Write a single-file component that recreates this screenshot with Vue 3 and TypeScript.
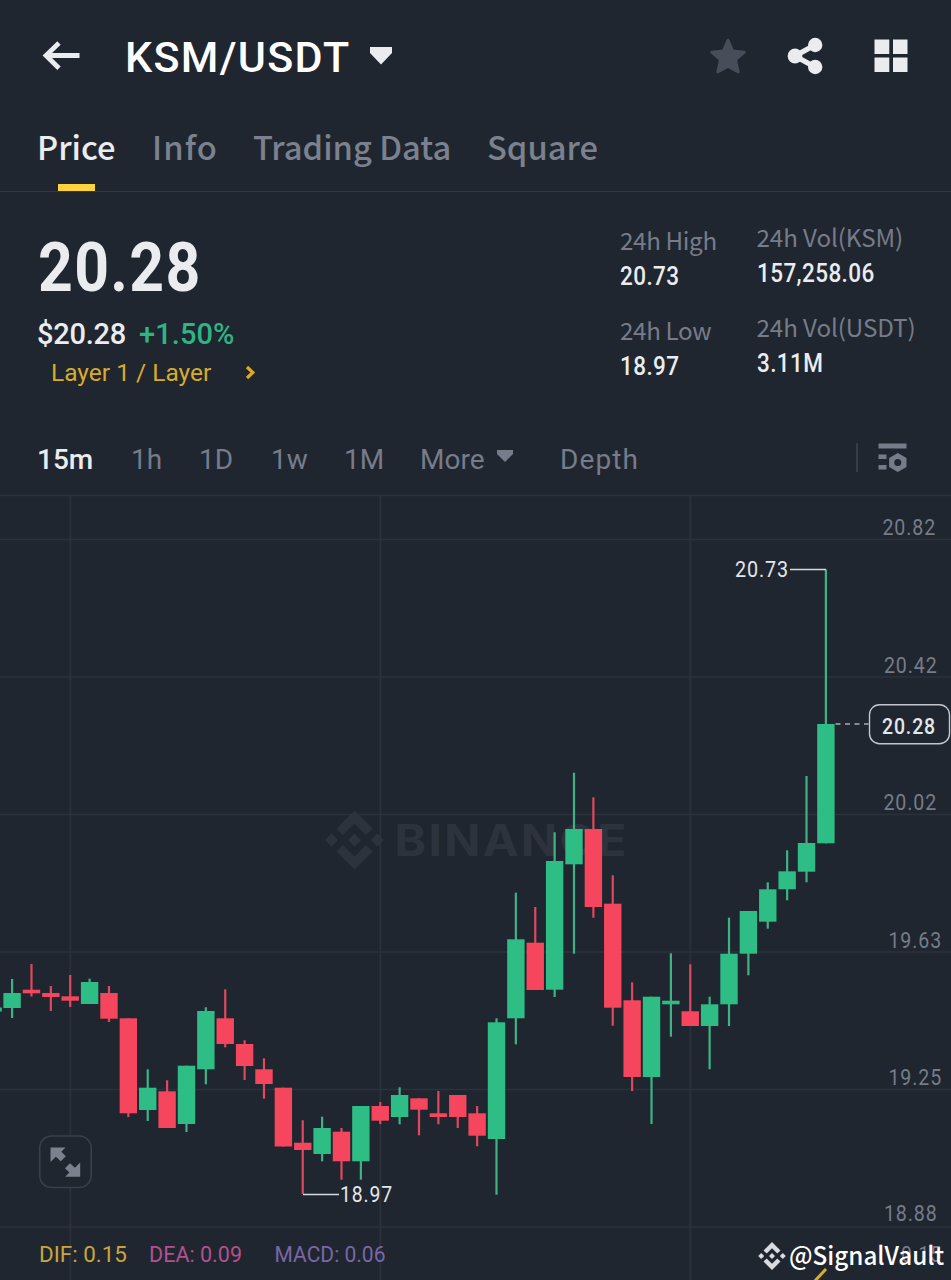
<script setup lang="ts">
type Candle = [up: 0 | 1, top: number, bottom: number, high: number, low: number]

interface Label {
  text: string
  x: number
  y: number
  w: number
  cls: string
}

const tabs: string[] = ['Price', 'Info', 'Trading Data', 'Square']
const frames: string[] = ['15m', '1h', '1D', '1w', '1M']

const stats = [
  { label: '24h High', value: '20.73' },
  { label: '24h Low', value: '18.97' },
]
const volumes = [
  { label: '24h Vol(KSM)', value: '157,258.06' },
  { label: '24h Vol(USDT)', value: '3.11M' },
]

const candles: Candle[] = [
  [1, 993, 1008, 979, 1018],
  [0, 989.7, 993.3, 964, 996.5],
  [0, 993, 997, 986, 1011],
  [0, 996.3, 1000.7, 975, 1007],
  [1, 982, 1004, 978.7, 1004],
  [0, 993, 1018.7, 986, 1022],
  [0, 1018.3, 1113.3, 1018.3, 1117],
  [1, 1087.7, 1110, 1069.3, 1121],
  [0, 1091.3, 1128, 1080.3, 1128],
  [1, 1065.7, 1124, 1065.7, 1132],
  [1, 1011, 1069.3, 1007.3, 1084.3],
  [0, 1018.3, 1044, 989.3, 1047.3],
  [0, 1044, 1066, 1040.3, 1080],
  [0, 1069.3, 1084, 1058.3, 1098.7],
  [0, 1087.7, 1146.5, 1087.7, 1146.5],
  [0, 1142.7, 1150, 1120.3, 1194],
  [1, 1128, 1154, 1116.7, 1161.3],
  [0, 1131.7, 1161.3, 1128, 1179.7],
  [1, 1106, 1161.3, 1106, 1179.7],
  [0, 1106, 1120.7, 1102, 1124],
  [1, 1095, 1117, 1087.3, 1124.3],
  [0, 1098.3, 1109.7, 1098.3, 1135.3],
  [0, 1113.3, 1117, 1091, 1124.3],
  [0, 1095, 1117, 1095, 1128],
  [0, 1113.3, 1135.7, 1106, 1146.3],
  [1, 1022.3, 1139, 1018.3, 1194.7],
  [1, 939.3, 1018.3, 892.7, 1044.3],
  [0, 942.7, 990, 907, 990],
  [1, 861, 989.7, 832.3, 997],
  [1, 829, 864.3, 772.7, 953.7],
  [0, 829, 907, 797.3, 917.7],
  [0, 903.7, 1007.7, 875.3, 1025.7],
  [0, 1000.3, 1077, 982.3, 1091],
  [1, 996.7, 1077, 996.7, 1124],
  [1, 1000.7, 1004.3, 953.3, 1036.7],
  [0, 1011.3, 1026, 964.3, 1026],
  [1, 1004.3, 1026, 996.7, 1069.3],
  [1, 953.7, 1004.3, 917.7, 1026],
  [1, 911, 953.7, 911, 975.3],
  [1, 889.3, 921.7, 882.3, 928.7],
  [1, 871.3, 889.3, 850.3, 900.3],
  [1, 843, 871.7, 776, 882.3],
  [1, 724, 843.3, 569.5, 843.3],
]
const cx = (i: number): number => 12.1 + i * 19.376

const gridY: number[] = [495.5, 539.5, 677, 814.5, 952, 1089.5, 1227]
const gridX: number[] = [70.3, 380.3, 690.3]

const labels: Label[] = [
  { text: '20.82', x: 882.5, y: 535, w: 53.5, cls: 'axis' },
  { text: '20.42', x: 884, y: 672.5, w: 53.5, cls: 'axis' },
  { text: '20.02', x: 883.5, y: 810, w: 53.5, cls: 'axis' },
  { text: '19.63', x: 888.5, y: 947.5, w: 53.5, cls: 'axis' },
  { text: '19.25', x: 888.5, y: 1085, w: 53.5, cls: 'axis' },
  { text: '18.88', x: 884, y: 1220.5, w: 53.5, cls: 'axis' },
  { text: '0.15', x: 901, y: 1262, w: 41, cls: 'axis' },
  { text: '20.28', x: 882, y: 734.3, w: 54, cls: 'now' },
  { text: '20.73', x: 735, y: 577.2, w: 54, cls: 'mark' },
  { text: '18.97', x: 340, y: 1202, w: 53, cls: 'mark' },
  { text: 'DIF: 0.15', x: 39, y: 1262, w: 88, cls: 'dif' },
  { text: 'DEA: 0.09', x: 149, y: 1262, w: 93, cls: 'dea' },
  { text: 'MACD: 0.06', x: 274.5, y: 1262, w: 111, cls: 'macd' },
]
</script>

<template>
  <main class="screen">
    <header class="top">
      <svg class="back" width="38" height="30" viewBox="0 0 38 30">
        <path d="M37.500 14.500H4M17 2L4 14.500l13 12.800" fill="none" stroke="#eaecef" stroke-width="4.800" />
      </svg>
      <h1 class="pair">KSM/USDT</h1>
      <svg class="caret" width="24" height="18" viewBox="0 0 24 18">
        <path d="M1 0h22v6L12 17.500 1 6z" fill="#eaecef" />
      </svg>
      <div class="actions">
        <svg width="38" height="38" viewBox="0 0 38 38">
          <path
            d="M19 3l4.800 10.700 11.700 1.300-8.700 7.800 2.500 12.200L19 29.600 8.700 35l2.500-12.200L2.500 15l11.700-1.300z"
            fill="#474d59" stroke="#474d59" stroke-width="2.600" stroke-linejoin="round"
          />
        </svg>
        <svg width="36" height="38" viewBox="0 0 36 38">
          <path d="M28 8L8 19l20 11" fill="none" stroke="#eaecef" stroke-width="5.400" />
          <g fill="#eaecef">
            <circle cx="28.200" cy="8" r="7.200" />
            <circle cx="8" cy="19" r="7.400" />
            <circle cx="28.200" cy="30" r="7.200" />
          </g>
        </svg>
        <svg width="34" height="34" viewBox="0 0 34 34">
          <path d="M.5.5h14.800v14.500H.5zM19 .500h14.500v14.500H19zM.5 18.500h14.800V33H.5zM19 18.500h14.500V33H19z" fill="#eaecef" />
        </svg>
      </div>
    </header>

    <nav class="tabs">
      <span v-for="(t, i) in tabs" :key="t" class="tab" :class="{ active: i === 0 }">{{ t }}</span>
    </nav>

    <section class="overview">
      <div class="quote">
        <div class="price"><span>20.28</span></div>
        <div class="change"><span class="fiat">$20.28</span><span class="pct">+1.50%</span></div>
        <div class="tag">
          <span>Layer 1 / Layer</span>
          <svg width="12" height="16" viewBox="0 0 12 16">
            <path d="M2 2L7.800 7.500 2 13" fill="none" stroke="#d9ab2c" stroke-width="3.200" />
          </svg>
        </div>
      </div>
      <div class="stats">
        <div v-for="s in stats" :key="s.label" class="stat">
          <span class="label">{{ s.label }}</span>
          <span class="value">{{ s.value }}</span>
        </div>
      </div>
      <div class="stats volumes">
        <div v-for="s in volumes" :key="s.label" class="stat">
          <span class="label">{{ s.label }}</span>
          <span class="value">{{ s.value }}</span>
        </div>
      </div>
    </section>

    <nav class="frames">
      <span v-for="(f, i) in frames" :key="f" :class="{ active: i === 0 }">{{ f }}</span>
      <span class="more">
        More
        <svg width="16" height="12" viewBox="0 0 16 12"><path d="M0 0h16v4L8 12 0 4z" fill="#767c89" /></svg>
      </span>
      <span class="depth">Depth</span>
      <div class="tools">
        <i class="rule"></i>
        <svg width="29" height="30" viewBox="0 0 29 30">
          <path d="M.5.5h28v5H.5zM.5 11.500h8v4.500h-8zM.5 22h8v4.500h-8z" fill="#767c89" />
          <path
            d="M19.800 10l8.700 5v9l-8.700 5-8.700-5v-9zM19.800 16a3.500 3.500 0 1 0 0 7 3.500 3.500 0 0 0 0-7z"
            fill="#767c89" fill-rule="evenodd"
          />
        </svg>
      </div>
    </nav>

    <svg class="chart" width="951" height="786" viewBox="0 494 951 786">
      <g stroke="#2b323c" stroke-width="1.600">
        <line v-for="y in gridY" :key="y" x1="0" x2="951" :y1="y" :y2="y" />
        <line v-for="x in gridX" :key="x" :x1="x" :x2="x" y1="495" y2="1280" />
      </g>

      <g fill="#2d333d">
        <g transform="translate(354.500 840)">
          <path d="M0-29.500L18-11.500 11.500-5 0-16.500-11.500-5-18-11.500zM0 29.500L18 11.500 11.500 5 0 16.500-11.500 5-18 11.500z" />
          <path d="M0-6.500L6.500 0 0 6.500-6.500 0zM-23-6.500L-16.500 0-23 6.500-29.500 0zM23-6.500L29.500 0 23 6.500 16.500 0z" />
        </g>
        <text class="brand" x="394.500" y="856" textLength="234" lengthAdjust="spacingAndGlyphs">BINANCE</text>
      </g>

      <rect x="0" y="1007.500" width="1.800" height="4" fill="#2ebd85" />
      <g v-for="(c, i) in candles" :key="i" :fill="c[0] ? '#2ebd85' : '#f6465d'">
        <rect :x="cx(i) - 1.1" :y="c[3]" width="2.200" :height="c[4] - c[3]" :class="c[0] ? 'wick-up' : 'wick-down'" />
        <rect :x="cx(i) - 8.7" :y="c[1]" width="17.400" :height="c[2] - c[1]" />
      </g>

      <path d="M790 569.500h36M303 1194.500h36" stroke="#d5d8de" stroke-width="1.600" />
      <path d="M835.500 724h33" stroke="#a9adb5" stroke-width="1.500" stroke-dasharray="5 4.500" />
      <rect x="869.500" y="704.700" width="80" height="39" rx="10" fill="#1f262f" stroke="#c3c6cd" stroke-width="1.400" />

      <rect x="39.700" y="1136" width="51.500" height="51.500" rx="12" fill="#1f262f" stroke="#3a404b" stroke-width="1.600" />
      <path
        d="M50.500 1147.500h15l-4.200 4.200 4.500 4.500-5 5-4.900-4.500-5.400 5.400zM80.200 1176.800h-15l4.200-4.200-4.400-4.300 5-5 4.900 4.400 5.300-5.300z"
        fill="#7b818d"
      />

      <text
        v-for="l in labels" :key="l.text + l.y" :class="l.cls" :x="l.x" :y="l.y"
        :textLength="l.w" lengthAdjust="spacingAndGlyphs"
      >{{ l.text }}</text>

      <path d="M813 1283L826 1269" stroke="#d9ab2c" stroke-width="3" />
      <g fill="#d9dbe1" transform="translate(772 1256)">
        <path d="M0-14L8.500-5.500 5.300-2.400 0-7.700-5.300-2.400-8.500-5.500zM0 14L8.500 5.500 5.300 2.400 0 7.700-5.300 2.400-8.500 5.500z" />
        <path d="M0-3L3 0 0 3-3 0zM-10.800-3L-7.800 0-10.800 3-13.800 0zM10.800-3L13.800 0 10.800 3 7.800 0z" />
      </g>
      <text class="author" x="789" y="1264.500" textLength="155" lengthAdjust="spacingAndGlyphs">@SignalVault</text>
    </svg>
  </main>
</template>

<style>
body {
  margin: 0;
  background: #1f262f;
}
</style>

<style scoped>
.screen {
  width: 951px;
  height: 1280px;
  overflow: hidden;
  background: #1f262f;
  color: #eaecef;
  font-family: Roboto, 'Liberation Sans', sans-serif;
}
.screen svg {
  display: block;
  flex: none;
}
.top {
  display: flex;
  align-items: center;
  height: 111px;
  padding: 0 43px 0 42px;
  box-sizing: border-box;
}
.pair {
  width: 228px;
  margin: 3px 0 0 45px;
  font-size: 43px;
  line-height: 48px;
  font-weight: 550;
  letter-spacing: 1.3px;
  color: #fff;
  white-space: nowrap;
}
.caret {
  margin-left: 16px;
}
.actions {
  display: flex;
  align-items: center;
  margin-left: auto;
}
.actions svg + svg {
  margin-left: 40px;
}
.actions svg + svg + svg {
  margin-left: 51px;
}
.tabs {
  display: grid;
  grid-template-columns: 115px 101px 234px auto;
  height: 81px;
  box-sizing: border-box;
  padding: 1px 0 0 37px;
  border-bottom: 1px solid #323842;
}
.tab {
  position: relative;
  justify-self: start;
  font-family: 'Noto Sans CJK SC', sans-serif;
  font-size: 32.7px;
  line-height: 68px;
  font-weight: 500;
  color: #7b818e;
  white-space: nowrap;
}
.tab:nth-child(2) {
  letter-spacing: 1.1px;
}
.tab.active {
  color: #eaecef;
}
.tab.active::after {
  content: '';
  position: absolute;
  left: 21px;
  top: 72px;
  width: 37px;
  height: 7px;
  background: #fcd33f;
}
.overview {
  display: grid;
  grid-template-columns: 582px 136.5px auto;
  height: 232px;
  box-sizing: border-box;
  padding-left: 38px;
  white-space: nowrap;
}
.quote {
  padding-top: 36px;
}
.price {
  height: 80px;
  font-size: 69px;
  line-height: 80px;
  font-weight: 700;
  letter-spacing: 1.5px;
}
.price span {
  display: inline-block;
  transform: scaleX(0.88);
  transform-origin: 0 50%;
}
.change {
  display: flex;
  gap: 13px;
  height: 51px;
  margin-left: -1px;
  font-size: 29px;
  line-height: 52px;
  font-weight: 500;
  letter-spacing: -0.25px;
}
.pct {
  color: #2fb483;
  letter-spacing: 0.1px;
}
.tag {
  display: flex;
  align-items: center;
  gap: 33.5px;
  height: 27px;
  padding-left: 13px;
  font-size: 24.5px;
  line-height: 27px;
  color: #d9ab2c;
}
.stats {
  padding-top: 32px;
}
.volumes {
  padding-top: 29px;
}
.stat {
  display: flex;
  flex-direction: column;
  align-items: flex-start;
  height: 90px;
}
.label {
  height: 35px;
  font-family: 'Noto Sans CJK SC', sans-serif;
  font-size: 24.2px;
  line-height: 31px;
  letter-spacing: -0.35px;
  color: #767c89;
}
.volumes .label {
  letter-spacing: -0.1px;
}
.value {
  font-size: 25px;
  line-height: 36px;
  font-weight: 500;
  letter-spacing: 0.45px;
  transform: scaleX(0.9);
  transform-origin: 0 50%;
}
.frames {
  display: grid;
  grid-template-columns: 94px 68px 72px 73px 76px 140px 199px auto;
  height: 70px;
  padding-left: 37px;
  font-size: 28px;
  line-height: 71px;
  color: #767c89;
  white-space: nowrap;
}
.frames .active {
  color: #eaecef;
  font-weight: 500;
}
.more {
  display: flex;
  gap: 12px;
}
.more svg {
  margin-top: 26px;
}
.depth {
  letter-spacing: 1.1px;
}
.tools {
  display: flex;
  align-items: flex-start;
  gap: 20px;
  padding: 19px 0 0 97px;
}
.rule {
  width: 2px;
  height: 29px;
  background: #373d48;
}
.wick-up {
  fill: #3fb286;
}
.wick-down {
  fill: #e0485e;
}
.chart text {
  font-size: 22.5px;
}
.axis {
  fill: #767c89;
}
.chart .axis,
.chart .mark,
.chart .now {
  letter-spacing: 1px;
}
.mark,
.now {
  fill: #e3e6ea;
}
.now {
  font-weight: 500;
}
.dif {
  fill: #c9a63c;
}
.dea {
  fill: #b3508f;
}
.macd {
  fill: #7a66a6;
}
.chart .brand {
  font-family: Inter, sans-serif;
  font-size: 44px;
  font-weight: 700;
  letter-spacing: 2px;
}
.chart .author {
  font-family: 'Noto Sans CJK SC', sans-serif;
  font-size: 25px;
  font-weight: 500;
  fill: #fff;
}
</style>
